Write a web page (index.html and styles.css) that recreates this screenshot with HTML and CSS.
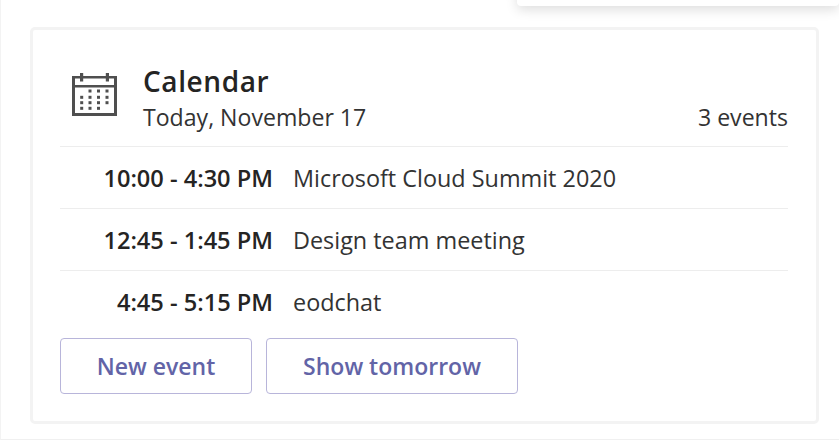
FILE: index.html
```html
<!DOCTYPE html>
<html lang="en">
<head>
<meta charset="utf-8">
<title>Calendar</title>
<link rel="stylesheet" href="styles.css">
</head>
<body>
<div class="flyout"></div>
<main class="frame">
  <section class="card">
    <header class="head">
      <svg class="icon" width="45" height="43" viewBox="0 0 45 43" aria-hidden="true">
        <g fill="#4f4f4f">
          <path fill-rule="evenodd" d="M0 3H45V43H0ZM3 5.500V12H42V5.500ZM3 14.500V40H42V14.500Z"/>
          <rect x="8" y="0" width="3.200" height="8.500"/>
          <rect x="33.800" y="0" width="3.200" height="8.500"/>
          <rect x="16.500" y="16.500" width="3" height="3"/><rect x="25" y="16.500" width="3" height="3"/><rect x="33.500" y="16.500" width="3" height="3"/>
          <rect x="8.200" y="22.800" width="3" height="3"/><rect x="16.500" y="22.800" width="3" height="3"/><rect x="25" y="22.800" width="3" height="3"/><rect x="33.500" y="22.800" width="3" height="3"/>
          <rect x="8.200" y="28.200" width="3" height="3"/><rect x="16.500" y="28.200" width="3" height="3"/><rect x="25" y="28.200" width="3" height="3"/><rect x="33.500" y="28.200" width="3" height="3"/>
          <rect x="8.200" y="33.800" width="3" height="3"/><rect x="16.500" y="33.800" width="3" height="3"/><rect x="25" y="33.800" width="3" height="3"/>
        </g>
      </svg>
      <div class="titles">
        <h1 class="title">Calendar</h1>
        <div class="subline"><span>Today, November 17</span><span>3 events</span></div>
      </div>
    </header>
    <ul class="events">
      <li class="event"><span class="time">10:00 - 4:30 PM</span><span class="name">Microsoft Cloud Summit 2020</span></li>
      <li class="event"><span class="time">12:45 - 1:45 PM</span><span class="name">Design team meeting</span></li>
      <li class="event"><span class="time">4:45 - 5:15 PM</span><span class="name">eodchat</span></li>
    </ul>
    <div class="actions">
      <button class="btn btn-new">New event</button>
      <button class="btn btn-tomorrow">Show tomorrow</button>
    </div>
  </section>
</main>
</body>
</html>
```
FILE: styles.css
```css
* { box-sizing: border-box; }
html, body { margin: 0; height: 100%; }
body {
  width: 839px;
  height: 440px;
  overflow: hidden;
  background: #fff;
  position: relative;
  font-family: "Open Sans", "Noto Sans", sans-serif;
  color: #252423;
}
.flyout {
  position: absolute;
  top: -20px;
  left: 517px;
  width: 322px;
  height: 26px;
  background: #fff;
  border-radius: 4px;
  box-shadow: 0 4px 12px rgba(0,0,0,.13);
}
.frame {
  height: 440px;
  border-left: 1px solid #f3f3f3;
  border-bottom: 1px solid #f0f0f0;
  padding: 27px 20px 14px 29px;
}
.card {
  height: 397px;
  border: 3px solid #f3f3f3;
  border-radius: 5px;
  padding: 43px 28px 0 27px;
  display: flex;
  flex-direction: column;
}
.head { display: flex; gap: 26px; height: 74px; border-bottom: 1px solid #ededed; }
.icon { margin: 0 0 0 12px; flex: none; }
.titles { flex: 1; margin-top: -11px; }
.title { margin: 0; font-size: 28px; line-height: 38px; font-weight: 600; letter-spacing: .6px; }
.subline { display: flex; justify-content: space-between; font-size: 23.100px; line-height: 34px; color: #333; }
.events { list-style: none; margin: 0; padding: 0; }
.event { display: flex; align-items: center; height: 62px; border-bottom: 1px solid #ededed; font-size: 23.400px; }
.event:last-child { border-bottom: 0; height: 61px; }
.time { width: 213px; flex: none; text-align: right; font-weight: 600; font-size: 23.600px; margin-right: 20px; }
.name { color: #333; }
.actions { display: flex; gap: 14px; margin-top: 6px; }
.btn {
  height: 56px;
  background: #fff;
  border: 1px solid #b8b5da;
  border-radius: 4px;
  color: #6264a7;
  font: 600 23px "Open Sans", "Noto Sans", sans-serif;
  padding: 0;
}
.btn-new { width: 192px; }
.btn-tomorrow { width: 252px; }
```
